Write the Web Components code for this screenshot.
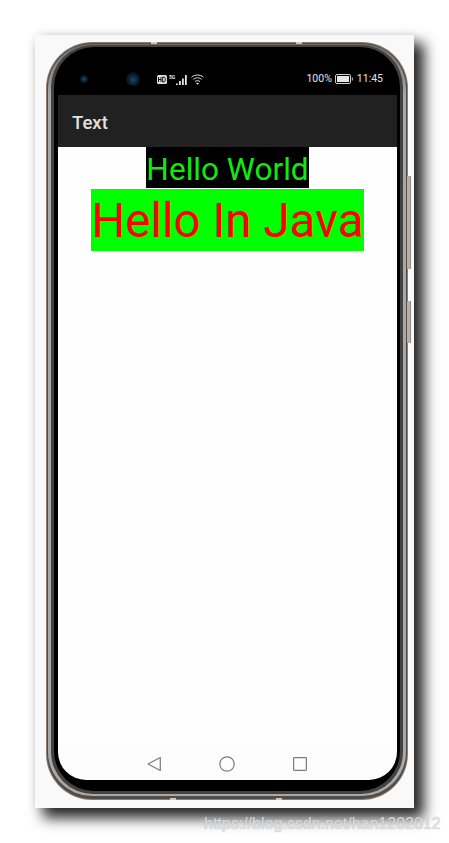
<!DOCTYPE html>
<html>
<head>
<meta charset="utf-8">
<style>
    html, body { margin: 0; background: #fff; }
    body { width: 449px; height: 843px; overflow: hidden; position: relative; font-family: Roboto, sans-serif; }
</style>
</head>
<body>
<shot-page>
    <phone-frame>
        <status-strip slot="status"></status-strip>
        <app-bar slot="bar">Text</app-bar>
        <text-label tone="dark">Hello World</text-label>
        <text-label tone="bright">Hello In Java</text-label>
        <nav-strip slot="nav"></nav-strip>
    </phone-frame>
</shot-page>
<water-mark>https://blog.csdn.net/han1202012</water-mark>

<template id="page-tmpl">
    <style>
        :host { display: block; padding: 35px 35px 0; }
        .sheet {
            width: 379px;
            height: 773px;
            box-sizing: border-box;
            padding: 7px 6px 8px 11px;
            background: #f9f9f9;
            box-shadow: 9px 9px 13px 1px #262626, 0 0 8px rgba(0, 0, 0, .08);
        }
    </style>
    <div class="sheet"><slot></slot></div>
</template>

<template id="phone-tmpl">
    <style>
        :host { display: block; position: relative; width: 362px; height: 758px; }
        .edge, .dark, .light, .mid, .glass { box-sizing: border-box; height: 100%; display: flex; flex-direction: column; }
        .edge { background: #8d7c6e; padding: 1px; border-radius: 46px; }
        .dark { background: #4f4c4a; padding: 1px 1px 3px; border-radius: 45px; }
        .light { background: linear-gradient(#6f6d6b 0, #aaa8a6 7%, #aaa8a6 100%); padding: 1px 3px 2px; border-radius: 44px; }
        .mid { background: #444241; padding: 2px 3px 3px; border-radius: 42px; }
        .glass { background: #000; padding: 0 3px 11px 4px; border-radius: 40px; }
        .screen { flex: 1; display: flex; flex-direction: column; min-height: 0; border-radius: 0 0 28px 28px; overflow: hidden; }
        .content { flex: 1; display: flex; flex-direction: column; align-items: center; background: #fefefe; }
        .key { position: absolute; background: #bcb0a4; border-radius: 1px; box-shadow: inset -1px 0 0 #96897d; }
        .key.up { left: 361px; top: 134px; width: 4px; height: 93px; }
        .key.down { left: 361px; top: 259px; width: 4px; height: 42px; }
        .mark { position: absolute; width: 6px; height: 2px; background: #d8c6b4; }
        .m1 { left: 105px; top: 0; }
        .m2 { left: 250px; top: 0; }
        .m3 { left: 124px; top: 756px; }
        .m4 { left: 230px; top: 756px; }
    </style>
    <div class="edge"><div class="dark"><div class="light"><div class="mid"><div class="glass">
        <slot name="status"></slot>
        <div class="screen">
            <slot name="bar"></slot>
            <div class="content"><slot></slot></div>
            <slot name="nav"></slot>
        </div>
    </div></div></div></div></div>
    <div class="key up"></div>
    <div class="key down"></div>
    <div class="mark m1"></div>
    <div class="mark m2"></div>
    <div class="mark m3"></div>
    <div class="mark m4"></div>
</template>

<template id="status-tmpl">
    <style>
        :host { display: flex; align-items: center; height: 48px; flex: none; padding: 16px 14px 0 0; box-sizing: border-box; color: #e2e2e2; font: 400 10.5px/12px Roboto, sans-serif; }
        .cam { border-radius: 50%; flex: none; }
        .cam.a { width: 8px; height: 8px; margin-left: 22px; background: radial-gradient(circle at 50% 50%, #174c73 0, #0a2233 45%, #000 100%); }
        .cam.b { width: 14px; height: 14px; margin-left: 38px; background: radial-gradient(circle at 50% 55%, #154a75 0, #091f30 45%, #000 100%); }
        svg { display: block; flex: none; }
        .hd { margin-left: 17px; }
        .sig { margin-left: 2px; }
        .wifi { margin-left: 2px; }
        .right { margin-left: auto; display: flex; align-items: center; }
        .bat { margin: 0 4px 0 3px; }
    </style>
    <span class="cam a"></span>
    <span class="cam b"></span>
    <svg class="hd" width="10" height="9" viewBox="0 0 10 9"><rect width="10" height="9" rx="1.5" fill="#dedede"/><path d="M1.5 2v5M4 2v5M1.5 4.5H4M5.7 2v5h1.2c2 0 2 -5 0 -5z" fill="none" stroke="#111" stroke-width="1"/></svg>
    <svg class="sig" width="20" height="11" viewBox="0 0 20 11"><path d="M7 9.500h1.800V11H7zM10 7h1.800v4H10zM13 4.500h1.800V11H13zM16 1h1.800v10H16z" fill="#e4e4e4"/><text x="0" y="4.600" font-family="Roboto, sans-serif" font-size="5" font-weight="700" fill="#e4e4e4">5G</text></svg>
    <svg class="wifi" width="13" height="11" viewBox="0 0 13 11"><path d="M.5 3.200C3.700.3 9.300.3 12.500 3.200M2.300 5.400C4.700 3.300 8.300 3.300 10.700 5.400M4 7.500C5.400 6.400 7.600 6.400 9 7.500" fill="none" stroke="#e6e6e6" stroke-width="1"/><path d="M6.500 10.800 5.100 9.200c.9-.6 1.900-.6 2.800 0z" fill="#e6e6e6"/></svg>
    <div class="right">
        <span>100%</span>
        <svg class="bat" width="18" height="10" viewBox="0 0 18 10"><rect x=".5" y=".5" width="15" height="9" rx="1.500" fill="none" stroke="#cfcfcf"/><rect x="2" y="2" width="12" height="6" fill="#e6e6e6"/><rect x="16.800" y="3.500" width="1" height="3" fill="#cfcfcf"/></svg>
        <span>11:45</span>
    </div>
</template>

<template id="bar-tmpl">
    <style>
        :host { display: flex; align-items: center; flex: none; height: 52px; padding: 3px 0 0 14px; box-sizing: border-box; background: #212121; color: #e2e2e2; font: 500 18.500px Roboto, sans-serif; }
    </style>
    <slot></slot>
</template>

<template id="label-tmpl">
    <style>
        :host { display: block; flex: none; white-space: nowrap; font-family: Roboto, sans-serif; }
        :host([tone="dark"]) { background: #000; color: #10ea10; font-size: 31.600px; line-height: 37px; padding-top: 4px; margin-bottom: 1px; }
        :host([tone="bright"]) { background: #00ff00; color: #ff0000; font-size: 47.500px; line-height: 59px; padding-top: 3px; }
    </style>
    <slot></slot>
</template>

<template id="nav-tmpl">
    <style>
        :host { display: flex; justify-content: center; align-items: center; gap: 57px; flex: none; height: 35px; background: #fcfcfc; padding: 3px 2px 0 0; box-sizing: border-box; }
        svg { display: block; }
    </style>
    <svg width="16" height="16" viewBox="0 0 16 16"><path d="M14.300 1.500v13L2 8z" fill="none" stroke="#7b7b7b" stroke-width="1.200" stroke-linejoin="round"/></svg>
    <svg width="16" height="16" viewBox="0 0 16 16"><circle cx="8" cy="8" r="7.200" fill="none" stroke="#7b7b7b" stroke-width="1.200"/></svg>
    <svg width="16" height="16" viewBox="0 0 16 16"><rect x="1.600" y="1.600" width="12.800" height="12.800" rx=".8" fill="none" stroke="#7b7b7b" stroke-width="1.200"/></svg>
</template>

<template id="mark-tmpl">
    <style>
        :host { position: absolute; left: 204px; top: 814px; color: rgba(226, 226, 226, .9); font: 400 16px/20px "Liberation Sans", Arial, sans-serif; text-shadow: 0 0 1px rgba(120, 120, 120, .5); white-space: nowrap; }
    </style>
    <slot></slot>
</template>

<script>
    // every element is only a template in its own open shadow root
    function register(name, templateId) {
        customElements.define(name, class extends HTMLElement {
            connectedCallback() {
                if (this.shadowRoot) return;
                this.attachShadow({ mode: 'open' });
                this.shadowRoot.append(document.getElementById(templateId).content.cloneNode(true));
            }
        });
    }

    register('shot-page', 'page-tmpl');
    register('phone-frame', 'phone-tmpl');
    register('status-strip', 'status-tmpl');
    register('app-bar', 'bar-tmpl');
    register('text-label', 'label-tmpl');
    register('nav-strip', 'nav-tmpl');
    register('water-mark', 'mark-tmpl');
</script>
</body>
</html>
